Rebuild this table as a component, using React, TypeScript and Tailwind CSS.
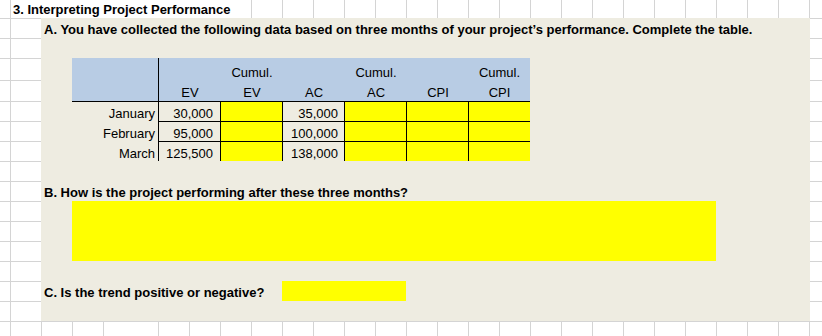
const grid = "border-[#d4d4d4]";

const widthClass: Record<number, string> = {
  11: "w-[11px]",
  12: "w-[12px]",
  30: "w-[30px]",
  31: "w-[31px]",
  55: "w-[55px]",
};

const heightClass: Record<number, string> = {
  19: "h-[19px]",
  20: "h-[20px]",
  21: "h-[21px]",
  22: "h-[22px]",
};

// row heights (incl. bottom grid line) beside the tan panel
const stripRows = [20, 20, 22, 21, 20, 20, 20, 20, 20, 20, 20, 20, 20, 20];

// column widths of the plain sheet below the panel
const bottomCols = [11, 31, 31, 31, 55, ...Array(21).fill(31), 12];

const months = [
  { month: "January", ev: "30,000", ac: "35,000" },
  { month: "February", ev: "95,000", ac: "100,000" },
  { month: "March", ev: "125,500", ac: "138,000" },
];

const headTop = ["", "Cumul.", "", "Cumul.", "", "Cumul."];
const headBottom = ["EV", "EV", "AC", "AC", "CPI", "CPI"];
const headWidths = ["w-[62px]", "w-[62px]", "w-[62px]", "w-[62px]", "w-[62px]", "w-[61px]"];

function Strip({ cols }: { cols: number[] }) {
  return (
    <div className={`flex flex-col border-t ${grid}`}>
      {stripRows.map((h, r) => (
        <div key={r} className={`flex border-b ${grid} ${heightClass[h]}`}>
          {cols.map((w, c) => (
            <div
              key={c}
              className={`${widthClass[w]} ${c < cols.length - 1 ? `border-r ${grid}` : ""}`}
            />
          ))}
        </div>
      ))}
      <div className="h-[19px] flex">
        {cols.map((w, c) => (
          <div
            key={c}
            className={`${widthClass[w]} ${c < cols.length - 1 ? `border-r ${grid}` : ""}`}
          />
        ))}
      </div>
    </div>
  );
}

function PerformanceTable() {
  return (
    <div className="ml-[31px] w-[458px] h-[103px] flex flex-col">
      {/* Header */}
      <div className="flex h-[43px] bg-[#b8cce4]">
        <div className="w-[87px] border-r border-black" />
        <div className="flex flex-col">
          <div className="flex h-[22px]">
            {headTop.map((t, i) => (
              <div key={i} className={`${headWidths[i]} flex items-end justify-center`}>
                {t}
              </div>
            ))}
          </div>
          <div className="flex h-[21px]">
            {headBottom.map((t, i) => (
              <div key={i} className={`${headWidths[i]} flex items-end justify-center pb-[1px]`}>
                {t}
              </div>
            ))}
          </div>
        </div>
      </div>
      <div className="h-px bg-black" />

      {/* Data rows */}
      {months.map((m, i) => (
        <div key={m.month}>
          <div className="flex h-[19px]">
            <div className="w-[87px] border-r border-black flex items-end justify-end pr-[3px]">
              {m.month}
            </div>
            <div className="w-[62px] border-r border-black flex items-end justify-end pr-[7px]">
              {m.ev}
            </div>
            <div className="w-[62px] border-r border-black bg-[#ffff00]" />
            <div className="w-[62px] border-r border-black flex items-end justify-end pr-[6px]">
              {m.ac}
            </div>
            <div className="w-[62px] border-r border-black bg-[#ffff00]" />
            <div className="w-[62px] border-r border-black bg-[#ffff00]" />
            <div className="w-[61px] bg-[#ffff00]" />
          </div>
          {i < months.length - 1 && <div className="ml-[86px] h-px bg-black" />}
        </div>
      ))}
    </div>
  );
}

export default function App() {
  return (
    <div className="w-[822px] h-[336px] bg-white overflow-hidden flex flex-col font-['Liberation_Sans',Arial,sans-serif] text-[13px] leading-[15px] text-black">
      {/* Title row */}
      <div className="flex h-[18px]">
        <div className={`w-[11px] border-r ${grid}`} />
        <div className={`w-[241px] border-r ${grid} flex items-end pl-[2px] pb-[1px] font-bold whitespace-nowrap`}>
          3. Interpreting Project Performance
        </div>
        {Array.from({ length: 18 }).map((_, i) => (
          <div key={i} className={`w-[31px] border-r ${grid}`} />
        ))}
        <div className="w-[12px]" />
      </div>

      {/* Middle band with the exercise panel */}
      <div className="flex h-[303px]">
        <div className="w-[41px]">
          <Strip cols={[11, 30]} />
        </div>

        <div className="w-[769px] h-[303px] bg-[#eeece1] flex flex-col">
          <div className="h-[20px] flex items-end pl-[3px] pb-[1px] font-bold whitespace-nowrap">
            A. You have collected the following data based on three months of your project’s
            performance. Complete the table.
          </div>
          <div className="h-[20px]" />
          <PerformanceTable />
          <div className="h-[20px]" />
          <div className="h-[20px] flex items-end pl-[3px] pb-[1px] font-bold whitespace-nowrap">
            B. How is the project performing after these three months?
          </div>
          <div className="ml-[31px] w-[644px] h-[60px] bg-[#ffff00]" />
          <div className="h-[20px]" />
          <div className="h-[20px] flex">
            <div className="w-[241px] flex items-end pl-[3px] pb-[1px] font-bold whitespace-nowrap">
              C. Is the trend positive or negative?
            </div>
            <div className="w-[124px] h-[20px] bg-[#ffff00]" />
          </div>
          <div className="h-[20px]" />
        </div>

        <div className="w-[12px]">
          <Strip cols={[12]} />
        </div>
      </div>

      {/* Plain sheet below */}
      <div className={`flex flex-1 border-t ${grid}`}>
        {bottomCols.map((w, i) => (
          <div
            key={i}
            className={`${widthClass[w]} ${i < bottomCols.length - 1 ? `border-r ${grid}` : ""}`}
          />
        ))}
      </div>
    </div>
  );
}
